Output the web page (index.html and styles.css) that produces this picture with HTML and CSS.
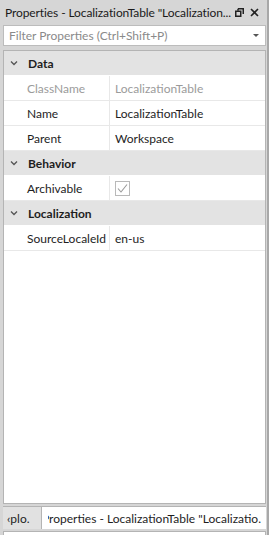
FILE: index.html
```html
<!DOCTYPE html>
<html lang="en">

<head>
    <meta charset="UTF-8">
    <title>Properties</title>
    <link rel="stylesheet" href="styles.css">
</head>

<body>
    <div class="window">
        <div class="title-bar">
            <span class="title">Properties - LocalizationTable "Localization...</span>
            <svg class="restore" width="9" height="9" viewBox="0 0 9 9">
                <path d="M3 0.75h5.25v5.25M3 0.75v2" fill="none" stroke="#222" stroke-width="1.5"/>
                <rect x="0.75" y="3.25" width="5" height="5" fill="none" stroke="#222" stroke-width="1.5"/>
            </svg>
            <svg class="close" width="9" height="9" viewBox="0 0 9 9">
                <path d="M1 1l7 7M8 1l-7 7" stroke="#222" stroke-width="1.6"/>
            </svg>
        </div>

        <div class="filter">
            <span class="placeholder">Filter Properties (Ctrl+Shift+P)</span>
            <span class="caret"></span>
        </div>

        <div class="props">
            <div class="group">
                <svg class="chevron" width="8" height="6" viewBox="0 0 8 6"><path d="M1 1.5l3 3 3-3" fill="none" stroke="#555" stroke-width="1.3"/></svg>
                <span>Data</span>
            </div>
            <div class="row readonly">
                <div class="name">ClassName</div>
                <div class="value">LocalizationTable</div>
            </div>
            <div class="row">
                <div class="name">Name</div>
                <div class="value">LocalizationTable</div>
            </div>
            <div class="row">
                <div class="name">Parent</div>
                <div class="value">Workspace</div>
            </div>
            <div class="group">
                <svg class="chevron" width="8" height="6" viewBox="0 0 8 6"><path d="M1 1.5l3 3 3-3" fill="none" stroke="#555" stroke-width="1.3"/></svg>
                <span>Behavior</span>
            </div>
            <div class="row">
                <div class="name">Archivable</div>
                <div class="value">
                    <span class="checkbox">
                        <svg width="11" height="9" viewBox="0 0 11 9"><path d="M1 4.5l3 3.5 6-7.5" fill="none" stroke="#9a9a9a" stroke-width="1.1"/></svg>
                    </span>
                </div>
            </div>
            <div class="group">
                <svg class="chevron" width="8" height="6" viewBox="0 0 8 6"><path d="M1 1.5l3 3 3-3" fill="none" stroke="#555" stroke-width="1.3"/></svg>
                <span>Localization</span>
            </div>
            <div class="row">
                <div class="name">SourceLocaleId</div>
                <div class="value">en-us</div>
            </div>
        </div>

        <div class="tabs">
            <div class="tab">‹plo.</div>
            <div class="tab active">
                <div class="clip"><span>Properties - LocalizationTable "Localizatio.</span></div>
            </div>
        </div>
        <div class="bottom-edge"></div>
    </div>
</body>

</html>
```

FILE: styles.css
```css
body, html {
    margin: 0;
    padding: 0;
    font-family: Lato, 'Open Sans', sans-serif;
    font-size: 12px;
    color: #1e1e1e;
    background: #d6d6d6;
}

.window {
    width: 269px;
    height: 535px;
    display: flex;
    flex-direction: column;
    box-sizing: border-box;
    border-right: 2px solid #a8a8a8;
    overflow: hidden;
}

.title-bar {
    height: 25px;
    display: flex;
    align-items: center;
    padding: 0 8px 0 5px;
    background: #d6d6d6;
    flex-shrink: 0;
}

.title {
    flex: 1;
    min-width: 0;
    overflow: hidden;
    white-space: nowrap;
    letter-spacing: -0.1px;
    color: #1a1a1a;
}

.restore,
.close {
    flex-shrink: 0;
}

.restore {
    margin: 0 6px 0 4px;
}

.filter {
    height: 19px;
    margin: 0 1px 0 3px;
    background: #fff;
    border: 1px solid #bcbcbc;
    display: flex;
    align-items: center;
    padding: 0 6px 0 5px;
    flex-shrink: 0;
}

.placeholder {
    flex: 1;
    color: #8a8a8a;
}

.caret {
    width: 0;
    height: 0;
    border-left: 3px solid transparent;
    border-right: 3px solid transparent;
    border-top: 3px solid #555;
}

.props {
    flex: 1;
    margin: 4px 1px 2px 3px;
    background: #fff;
    border: 1px solid #b4b4b4;
}

.group {
    height: 24px;
    border-bottom: 1px solid #fff;
    background: #e3e3e3;
    display: flex;
    align-items: center;
    font-weight: bold;
}

.chevron {
    margin: 0 10px 0 6px;
}

.row {
    height: 24px;
    display: flex;
    border-bottom: 1px solid #e8e8e8;
}

.row .name {
    width: 82px;
    padding-left: 23px;
    border-right: 1px solid #e8e8e8;
    display: flex;
    align-items: center;
    white-space: nowrap;
}

.row .value {
    flex: 1;
    padding-left: 5px;
    display: flex;
    align-items: center;
}

.readonly .name,
.readonly .value {
    color: #9b9b9b;
}

.checkbox {
    width: 15px;
    height: 15px;
    box-sizing: border-box;
    border: 1px solid #b9b9b9;
    display: flex;
    align-items: center;
    justify-content: center;
}

.tabs {
    height: 22px;
    margin: 0 1px 0 3px;
    display: flex;
    border-top: 1px solid #b4b4b4;
    flex-shrink: 0;
}

.tab {
    width: 34px;
    padding-left: 4px;
    background: #e1e1e1;
    border-right: 1px solid #b4b4b4;
    display: flex;
    align-items: center;
}

.tab.active {
    flex: 1;
    background: #fff;
    padding-left: 6px;
    border-right: none;
}

.tab.active .clip {
    flex: 1;
    overflow: hidden;
    white-space: nowrap;
}

.tab.active .clip span {
    display: inline-block;
    margin-left: -6px;
}

.bottom-edge {
    height: 3px;
    margin: 2px 1px 0 3px;
    border: 1px solid #b4b4b4;
    border-bottom: none;
    background: #fff;
    flex-shrink: 0;
}
```
